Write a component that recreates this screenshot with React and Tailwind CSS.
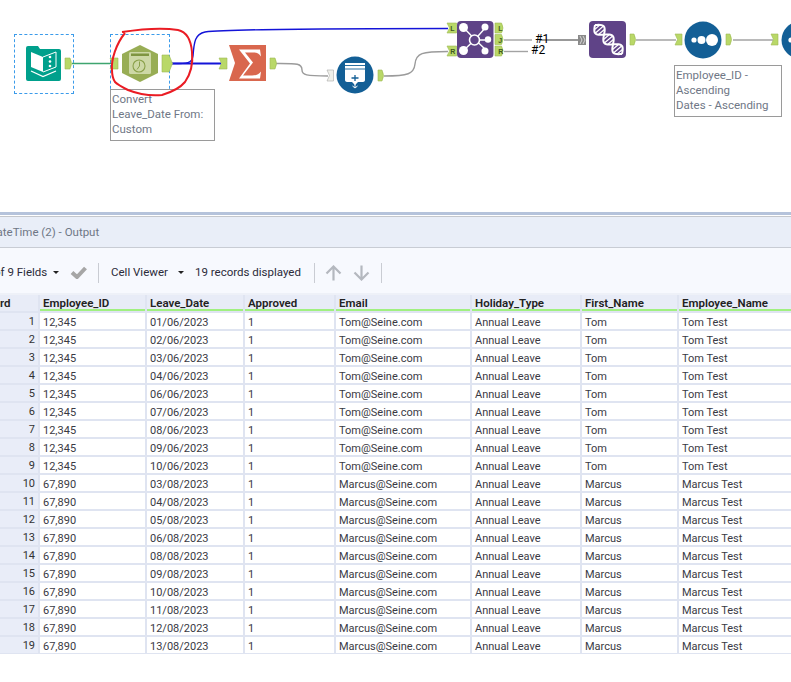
import React from 'react';

const tom = ['01/06/2023', '02/06/2023', '03/06/2023', '04/06/2023', '06/06/2023', '07/06/2023', '08/06/2023', '09/06/2023', '10/06/2023'];
const marcus = ['03/08/2023', '04/08/2023', '05/08/2023', '06/08/2023', '08/08/2023', '09/08/2023', '10/08/2023', '11/08/2023', '12/08/2023', '13/08/2023'];

const rows = [
  ...tom.map((d) => ['12,345', d, '1', 'Tom@Seine.com', 'Annual Leave', 'Tom', 'Tom Test']),
  ...marcus.map((d) => ['67,890', d, '1', 'Marcus@Seine.com', 'Annual Leave', 'Marcus', 'Marcus Test']),
];

const headers = ['Employee_ID', 'Leave_Date', 'Approved', 'Email', 'Holiday_Type', 'First_Name', 'Employee_Name'];

const gridCols = 'grid grid-cols-[38px_105px_96px_89px_134px_108px_95px_112px] gap-x-[2px]';

// output anchor, rounded on the right
const OutAnchor = ({ x, y, w = 8, h = 11, fill = '#b9d868', label }) => (
  <g>
    <path d={`M${x} ${y}h${w - 3}q3 ${h / 2} 0 ${h}h-${w - 3}z`} fill={fill} stroke="#9dbb55" strokeWidth="0.6" />
    {label && <text x={x + 3.2} y={y + 8} fontSize="7" fontWeight="700" fill="#3f5a1e" fontFamily="Liberation Sans, sans-serif">{label}</text>}
  </g>
);

// input anchor, notched on the left
const InAnchor = ({ x, y, w = 8, h = 11, fill = '#b9d868', stroke = '#9dbb55', label }) => (
  <g>
    <path d={`M${x} ${y}h${w}v${h}h-${w}l2.5 -${h / 2}z`} fill={fill} stroke={stroke} strokeWidth="0.6" />
    {label && <text x={x + 3.2} y={y + 8} fontSize="7" fontWeight="700" fill="#3f5a1e" fontFamily="Liberation Sans, sans-serif">{label}</text>}
  </g>
);

const Wires = () => (
  <g fill="none">
    <path d="M72 63.5H112" stroke="#3ea56f" strokeWidth="1.6" />
    <path d="M171 63.5H221" stroke="#1414d8" strokeWidth="1.8" />
    <path d="M171 63.5C186 63.5 192 64 193 56C194 42 195 34 205 32C230 29 380 28.5 448 28.5" stroke="#1414d8" strokeWidth="1.4" />
    <path d="M276 63.5C296 63.5 302 63 302 70C302 75 306 76 328 76" stroke="#9b9b9b" strokeWidth="1.4" />
    <path d="M384 76C408 76 414 74 415 64C416 53 422 51.5 448 51.5" stroke="#9b9b9b" strokeWidth="1.4" />
    <path d="M504 40H532" stroke="#a3a3a3" strokeWidth="1.4" />
    <path d="M504 51.5H528" stroke="#a3a3a3" strokeWidth="1.4" />
    <path d="M540 40H579" stroke="#777" strokeWidth="1.4" />
    <path d="M636 40H676" stroke="#a3a3a3" strokeWidth="1.4" />
    <path d="M733 40H773" stroke="#a3a3a3" strokeWidth="1.4" />
  </g>
);

const BookIcon = () => (
  <g>
    <path d="M28 46h10l2 3h19a2 2 0 0 1 2 2v28a2 2 0 0 1-2 2H28a2 2 0 0 1-2-2V48a2 2 0 0 1 2-2z" fill="#00a08c" />
    <path d="M31 52l12 5V72l-12-5z" fill="#fff" />
    <path d="M43 57l13-5V67l-13 5" fill="none" stroke="#fff" strokeWidth="1" />
    <path d="M31 71l12 5.5 13-5.5" fill="none" stroke="#fff" strokeWidth="1.3" />
    <circle cx="50" cy="57" r="1.3" fill="#fff" />
    <circle cx="50" cy="61.5" r="1.3" fill="#fff" />
    <circle cx="50" cy="66" r="1.3" fill="#fff" />
  </g>
);

const HexIcon = () => (
  <g>
    <path d="M140 45l18 9v19l-18 9-18-9V54z" fill="#98ad55" />
    <rect x="129" y="52" width="22" height="22" rx="1.5" fill="#cdd8a6" />
    <rect x="131" y="53.5" width="18" height="2.5" fill="#7f9541" />
    <circle cx="139" cy="66" r="6" fill="#cdd8a6" stroke="#8aa04a" strokeWidth="1.1" />
    <path d="M139.5 61.5V66L137 69.5" fill="none" stroke="#8aa04a" strokeWidth="1" />
  </g>
);

const SigmaIcon = () => (
  <g>
    <path d="M229 45h37v36h-37l6-18z" fill="#d9674e" />
    <path d="M239 49.5h21l1 7c-2-3-4-4-8-4h-8l8 10-10 13h9c4 0 7-1 9-4l-1 7h-21l11-15z" fill="#fff" />
  </g>
);

const AppendIcon = () => (
  <g>
    <circle cx="355" cy="75" r="18.5" fill="#135f96" />
    <path d="M345 63h20v17c0 1-1 2-2 2h-5l-3 3-3-3h-5c-1 0-2-1-2-2z" fill="#fff" />
    <path d="M345 65.5h20M345 69h20" stroke="#135f96" strokeWidth="0.9" />
    <path d="M355 75v6M351.5 78h7" stroke="#135f96" strokeWidth="1.3" />
    <path d="M355 84v3M352.5 86l2.5 2 2.5-2" fill="none" stroke="#fff" strokeWidth="1" />
  </g>
);

const JoinIcon = () => (
  <g>
    <rect x="457" y="21" width="36.5" height="37" rx="4" fill="#5f4387" />
    <g stroke="#fff" strokeWidth="1.4">
      <path d="M463 27l12 12.5M486 27l-11 12.5M463 51l12-11.5M486 50l-11-10.5M475 40h12" />
    </g>
    <circle cx="463.5" cy="27.5" r="4.5" fill="#fff" />
    <circle cx="485" cy="27" r="3.5" fill="#fff" />
    <circle cx="488" cy="39.5" r="3.2" fill="#fff" />
    <circle cx="463.5" cy="50.5" r="4.5" fill="#fff" />
    <circle cx="485" cy="51" r="3.5" fill="#fff" />
    <circle cx="474.5" cy="40" r="5" fill="#5f4387" stroke="#fff" strokeWidth="1.6" />
  </g>
);

// point on one strand of the helix, along the diagonal of the tile
const helix = (t, phase) => {
  const s = 5.5 * Math.sin(Math.PI * 3 * t + phase);
  return [595 + 27 * t + 0.76 * s, 25 + 29 * t - 0.65 * s];
};

const strand = (phase) => {
  const pts = [];
  for (let k = 0; k <= 36; k++) {
    const [x, y] = helix(k / 36, phase);
    pts.push(`${x.toFixed(1)} ${y.toFixed(1)}`);
  }
  return `M${pts.join('L')}`;
};

const rungs = [0.08, 0.16, 0.24, 0.42, 0.5, 0.58, 0.76, 0.84, 0.92];

const DnaIcon = () => (
  <g>
    <rect x="589" y="21" width="37" height="37" rx="4" fill="#5f4387" />
    <path d={strand(0)} fill="none" stroke="#fff" strokeWidth="2" />
    <path d={strand(Math.PI)} fill="none" stroke="#fff" strokeWidth="2" />
    {rungs.map((t) => {
      const [x1, y1] = helix(t, 0);
      const [x2, y2] = helix(t, Math.PI);
      return <path key={t} d={`M${x1} ${y1}L${x2} ${y2}`} stroke="#fff" strokeWidth="1.2" />;
    })}
  </g>
);

const SortIcon = ({ cx }) => (
  <g>
    <circle cx={cx} cy="40" r="18.5" fill="#135f96" />
    <circle cx={cx - 9} cy="40" r="2.6" fill="#fff" />
    <circle cx={cx - 1.5} cy="40" r="4" fill="#fff" />
    <circle cx={cx + 9} cy="40" r="6" fill="#fff" />
  </g>
);

const Note = ({ className, lines }) => (
  <div className={`absolute border border-[#9a9a9a] bg-white pl-[1px] pt-[2px] text-[#6f7786] text-[11.5px] leading-[15px] ${className}`}>
    {lines.map((l) => (
      <div key={l}>{l}</div>
    ))}
  </div>
);

const Canvas = () => (
  <div className="relative h-[212px] overflow-hidden bg-white">
    <div className="absolute left-[14px] top-[34px] w-[60px] h-[60px] border border-dashed border-[#3b9bea]" />
    <div className="absolute left-[110px] top-[34px] w-[60px] h-[60px] border border-dashed border-[#3b9bea]" />
    <Note className="left-[110px] top-[89px] w-[105px] h-[52px]" lines={['Convert', 'Leave_Date From:', 'Custom']} />
    <Note className="left-[674px] top-[65px] w-[108px] h-[52px]" lines={['Employee_ID -', 'Ascending', 'Dates - Ascending']} />
    <svg className="absolute left-0 top-0" width="791" height="212" viewBox="0 0 791 212">
      <Wires />
      <BookIcon />
      <OutAnchor x={65} y={58} />
      <InAnchor x={110} y={58} />
      <HexIcon />
      <path d="M162 55h7l3.5 8.5-3.5 8.5h-7z" fill="#b9d868" stroke="#9dbb55" strokeWidth="0.6" />
      <InAnchor x={219} y={58} />
      <SigmaIcon />
      <OutAnchor x={270} y={58} />
      <InAnchor x={327} y={70} w={6.5} fill="#f0f0ea" stroke="#aaa" />
      <AppendIcon />
      <OutAnchor x={378} y={70} w={7} />
      <InAnchor x={447} y={23} w={9.5} h={10} label="L" />
      <InAnchor x={447} y={46} w={9.5} h={10} label="R" />
      <JoinIcon />
      <OutAnchor x={495} y={23} w={9.5} h={10} label="L" />
      <OutAnchor x={495} y={34.5} w={9.5} h={10} label="J" />
      <OutAnchor x={495} y={46} w={9.5} h={10} label="R" />
      <g>
        <rect x="578" y="35" width="8" height="10" fill="#8a8a8a" />
        <path d="M580 36l2 4-2 4M583 36l2 4-2 4" fill="none" stroke="#e8e8e8" strokeWidth="0.8" />
      </g>
      <DnaIcon />
      <OutAnchor x={630} y={34} w={7} />
      <InAnchor x={675} y={34} w={7} />
      <SortIcon cx={703} />
      <OutAnchor x={726} y={34} w={7} />
      <InAnchor x={771} y={34} w={7} />
      <SortIcon cx={800} />
      <path
        d="M122 32C135 30 160 27 178 30C187 32 191 40 192 52C193 62 192 72 185 82C180 88 172 92 162 95C150 96 138 94 128 90C122 87 118 85 115 82C113 79 112 74 112 70C111 60 116 44 125 33"
        fill="none"
        stroke="#ea1c24"
        strokeWidth="2"
      />
    </svg>
    <span className="absolute left-[535px] top-[32px] text-[12px] leading-[15px] text-black">#1</span>
    <span className="absolute left-[531px] top-[43px] text-[12px] leading-[15px] text-black">#2</span>
  </div>
);

const Caret = () => <span className="w-0 h-0 shrink-0 border-x-[3px] border-x-transparent border-t-[3px] border-t-[#222]" />;

const Separator = ({ className }) => <span className={`w-px h-[20px] shrink-0 bg-[#c9ccd3] ${className}`} />;

const Toolbar = () => (
  <div className="flex items-center h-[45px] pt-[4px] bg-[#f7f9fe] text-[11.5px] text-[#2b2b3a] overflow-hidden">
    <span className="ml-[-6px] w-[59px] shrink-0 whitespace-nowrap">of 9 Fields</span>
    <Caret />
    <svg className="ml-[11px] shrink-0" width="17" height="13" viewBox="0 0 17 13">
      <path d="M2 6.5l5 4.5 8.5-9" fill="none" stroke="#a6a6a6" strokeWidth="4" />
    </svg>
    <Separator className="ml-[11px]" />
    <span className="ml-[12px] w-[67px] shrink-0 whitespace-nowrap">Cell Viewer</span>
    <Caret />
    <span className="ml-[11px] w-[106px] shrink-0 whitespace-nowrap">19 records displayed</span>
    <Separator className="ml-[13px]" />
    <svg className="ml-[10px] shrink-0" width="17" height="16" viewBox="0 0 17 16">
      <path d="M1.5 8.5L8.5 1.5l7 7M8.5 1.5V15.5" fill="none" stroke="#b4b8bf" strokeWidth="2.2" />
    </svg>
    <svg className="ml-[11px] shrink-0" width="17" height="16" viewBox="0 0 17 16">
      <path d="M1.5 7.5l7 7 7-7M8.5 14.5V.5" fill="none" stroke="#b4b8bf" strokeWidth="2.2" />
    </svg>
    <Separator className="ml-[11px]" />
  </div>
);

const Table = () => (
  <div className="overflow-hidden bg-[#dfe4f1] border-t-2 border-[#eef1f8] pb-[1px]">
    <div className={gridCols}>
      <div className="h-[16px] bg-[#e8ecf7] text-[11.5px] leading-[17px] font-semibold text-[#222] overflow-hidden whitespace-nowrap">rd</div>
      {headers.map((h) => (
        <div key={h} className="h-[16px] bg-[#e8ecf7] border-b-2 border-[#a0f080] pl-[3px] text-[11.5px] leading-[17px] font-semibold text-[#222] overflow-hidden whitespace-nowrap">
          {h}
        </div>
      ))}
    </div>
    {rows.map((r, i) => (
      <div key={i} className={`${gridCols} mt-[2px]`}>
        <div className="h-[16px] bg-[#e9edf8] pr-[3px] text-right text-[11px] leading-[18px] text-[#333]">{i + 1}</div>
        {r.map((c, j) => (
          <div key={j} className="h-[16px] bg-white pl-[3px] text-[11px] leading-[20px] text-[#3a3a44] overflow-hidden whitespace-nowrap">
            {c}
          </div>
        ))}
      </div>
    ))}
  </div>
);

const App = () => {
  return (
    <div className="w-[791px] h-[682px] overflow-hidden bg-white font-['Roboto',sans-serif]">
      <Canvas />
      <div className="h-[3px] bg-[#b5c3db]" />
      <div className="h-[2px] bg-white border-b border-[#c4c7cc]" />
      <div className="flex items-center h-[31px] pt-[2px] bg-[#e9eef8] border-b border-[#c8ccd4] text-[11.5px] text-[#6f7786] overflow-hidden">
        <span className="ml-[-11px] whitespace-nowrap">DateTime (2) - Output</span>
      </div>
      <Toolbar />
      <Table />
    </div>
  );
};

export default App;
